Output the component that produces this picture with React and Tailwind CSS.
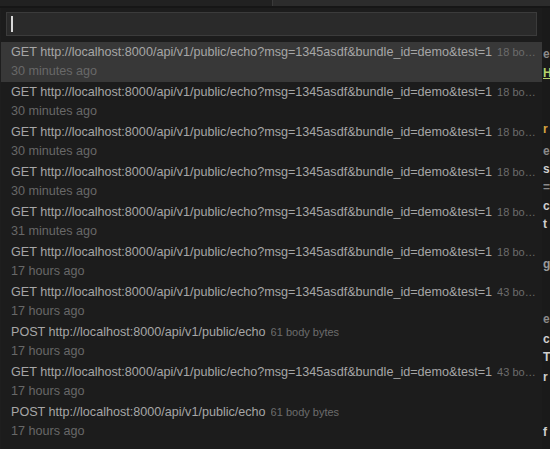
import React from "react";

const GET_URL = "GET http://localhost:8000/api/v1/public/echo?msg=1345asdf&bundle_id=demo&test=1";
const POST_URL = "POST http://localhost:8000/api/v1/public/echo";

const items = [
    { label: GET_URL, desc: "18 body bytes", time: "30 minutes ago" },
    { label: GET_URL, desc: "18 body bytes", time: "30 minutes ago" },
    { label: GET_URL, desc: "18 body bytes", time: "30 minutes ago" },
    { label: GET_URL, desc: "18 body bytes", time: "30 minutes ago" },
    { label: GET_URL, desc: "18 body bytes", time: "31 minutes ago" },
    { label: GET_URL, desc: "18 body bytes", time: "17 hours ago" },
    { label: GET_URL, desc: "43 body bytes", time: "17 hours ago" },
    { label: POST_URL, desc: "61 body bytes", time: "17 hours ago" },
    { label: GET_URL, desc: "43 body bytes", time: "17 hours ago" },
    { label: POST_URL, desc: "61 body bytes", time: "17 hours ago" },
];

// bits of the editor peeking out on the right
const edge = [
    { y: 39, c: "e", cls: "text-[#8a8a8a]" },
    { y: 58, c: "H", cls: "text-[#b5d36b] underline" },
    { y: 114, c: "r", cls: "text-[#d9a441]" },
    { y: 136, c: "e", cls: "text-[#8a8a8a]" },
    { y: 154, c: "s", cls: "text-[#cfcfcf]" },
    { y: 172, c: "=", cls: "text-[#8a8a8a]" },
    { y: 191, c: "c", cls: "text-[#cfcfcf]" },
    { y: 209, c: "t", cls: "text-[#cfcfcf]" },
    { y: 249, c: "g", cls: "text-[#9a9a9a]" },
    { y: 304, c: "e", cls: "text-[#8a8a8a]" },
    { y: 324, c: "c", cls: "text-[#cfcfcf]" },
    { y: 342, c: "T", cls: "text-[#cfcfcf]" },
    { y: 362, c: "r", cls: "text-[#cfcfcf]" },
    { y: 417, c: "f", cls: "text-[#cfcfcf]" },
];

const Row = ({ item, active }) => (
    <div className={`h-[40px] pl-[10px] pr-[4px] pt-[1px] ${active ? "bg-[#383838]" : ""}`}>
        <div className="flex items-baseline h-[19px] whitespace-nowrap overflow-hidden">
            <span className="shrink-0 text-[12.6px] text-[#a6a6a6]">{item.label}</span>
            <span className="ml-[5px] min-w-0 truncate text-[11px] text-[#6c6c6c]">{item.desc}</span>
        </div>
        <div className="h-[19px] text-[12.6px] text-[#686868] leading-[19px]">{item.time}</div>
    </div>
);

export default function App() {
    return (
        <div
            className="w-[550px] h-[449px] bg-[#1e1e1e] overflow-hidden flex flex-col"
            style={{ fontFamily: "'Liberation Sans', Arial, sans-serif" }}
        >
            <div className="flex h-[6px] shrink-0">
                <div className="w-[272px] bg-[#212121]" />
                <div className="flex-1 bg-[#2c2c2c] border-l border-[#3a3a3a]" />
            </div>
            <div className="h-[2px] bg-[#161616] shrink-0" />
            <div className="flex flex-1 min-h-0">
                <div className="w-[541px] ml-[1px] bg-[#1c1c1c] flex flex-col">
                    <div className="px-[5px] pt-[4px] pb-[6px]">
                        <div className="h-[24px] bg-[#2a2a2a] border border-[#3b3b3b] flex items-center pl-[4px]">
                            <div className="w-[2px] h-[16px] bg-[#d8d8d8]" />
                        </div>
                    </div>
                    <div className="flex flex-col">
                        {items.map((item, i) => (
                            <Row key={i} item={item} active={i === 0} />
                        ))}
                    </div>
                </div>
                <div className="relative flex-1 overflow-hidden bg-[#1a1a1a] text-[12px] font-bold leading-[14px]">
                    {edge.map((e, i) => (
                        <span key={i} className={`absolute left-[1px] ${e.cls}`} style={{ top: e.y }}>
                            {e.c}
                        </span>
                    ))}
                </div>
            </div>
        </div>
    );
}
